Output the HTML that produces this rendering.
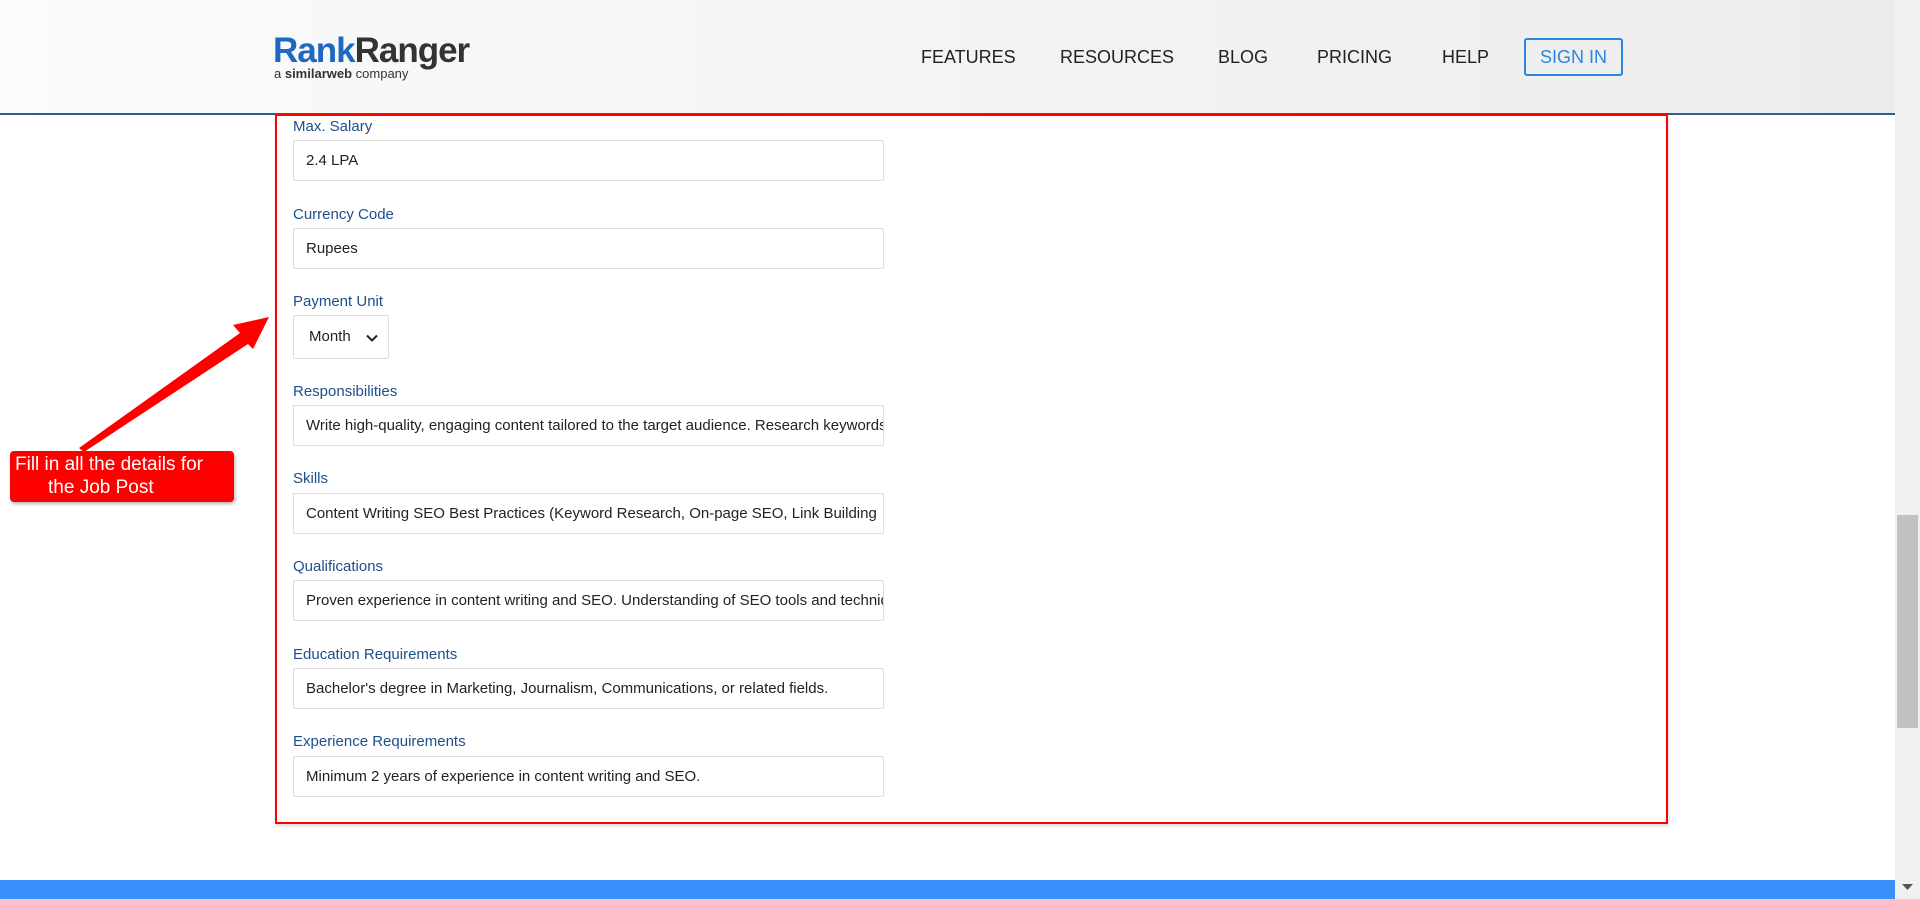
<!DOCTYPE html>
<html><head><meta charset="utf-8"><style>
*{box-sizing:border-box;margin:0;padding:0}
html,body{width:1920px;height:899px;overflow:hidden;background:#fff;font-family:"Liberation Sans",Arial,sans-serif;position:relative}
.hdr{position:absolute;left:0;top:0;width:1895px;height:115px;background:linear-gradient(90deg,#fbfbfb,#ececec);border-bottom:2px solid #2f5f8f}
.logo{position:absolute;left:273px;top:31px;font-weight:bold;font-size:35px;letter-spacing:-1px;line-height:40px}
.logo .a{color:#1f68c0}.logo .b{color:#333}
.sub{position:absolute;left:274px;top:67px;font-size:13px;color:#333;line-height:14px}
.sub b{font-weight:bold}
.nav{position:absolute;top:45px;font-size:18px;color:#222;line-height:24px}
.sign{position:absolute;left:1524px;top:38px;width:99px;height:38px;border:2px solid #2a86e0;border-radius:3px;color:#2a86e0;font-size:18px;text-align:center;line-height:34px}
.box{position:absolute;left:275px;top:114px;width:1393px;height:710px;border:2px solid #f00;box-shadow:1px 2px 3px rgba(0,0,0,.15)}
.lbl{position:absolute;left:293px;font-size:15px;color:#1d4f8c;line-height:18px}
.inp{position:absolute;left:293px;width:591px;height:41px;border:1px solid #ddd;border-radius:2px;font-size:15px;color:#222;padding-left:12px;line-height:39px;white-space:nowrap;overflow:hidden}
.sel{position:absolute;left:293px;top:315px;width:96px;height:44px;border:1px solid #ddd;border-radius:2px;font-size:15px;color:#222;padding-left:15px;line-height:42px}
.call{position:absolute;left:10px;top:451px;width:224px;height:51px;background:#f00;border-radius:4px;color:#fff;font-size:19px;line-height:23px;padding:2px 0 0 5px;box-shadow:1px 2px 3px rgba(0,0,0,.3)}
.foot{position:absolute;left:0;top:880px;width:1895px;height:19px;background:#3a91fb}
.sb{position:absolute;left:1895px;top:0;width:25px;height:899px;background:#f1f1f1}
.th{position:absolute;left:1897px;top:515px;width:21px;height:213px;background:#c1c1c1}
</style></head><body>
<div class="hdr"></div>
<div class="logo"><span class="a">Rank</span><span class="b">Ranger</span></div>
<div class="sub">a <b>similarweb</b> company</div>
<div class="nav" style="left:921px">FEATURES</div>
<div class="nav" style="left:1060px">RESOURCES</div>
<div class="nav" style="left:1218px">BLOG</div>
<div class="nav" style="left:1317px">PRICING</div>
<div class="nav" style="left:1442px">HELP</div>
<div class="sign">SIGN IN</div>
<div class="box"></div>
<div class="lbl" style="top:118px">Max. Salary</div>
<div class="inp" style="top:140px">2.4 LPA</div>
<div class="lbl" style="top:206px">Currency Code</div>
<div class="inp" style="top:228px">Rupees</div>
<div class="lbl" style="top:293px">Payment Unit</div>
<div class="sel">Month<svg style="position:absolute;left:72px;top:18px" width="12" height="8" viewBox="0 0 12 8"><path d="M1 1.5L6 6.5L11 1.5" fill="none" stroke="#222" stroke-width="2"/></svg></div>
<div class="lbl" style="top:383px">Responsibilities</div>
<div class="inp" style="top:405px">Write high-quality, engaging content tailored to the target audience. Research keywords</div>
<div class="lbl" style="top:470px">Skills</div>
<div class="inp" style="top:493px">Content Writing SEO Best Practices (Keyword Research, On-page SEO, Link Building</div>
<div class="lbl" style="top:558px">Qualifications</div>
<div class="inp" style="top:580px">Proven experience in content writing and SEO. Understanding of SEO tools and techniques</div>
<div class="lbl" style="top:646px">Education Requirements</div>
<div class="inp" style="top:668px">Bachelor's degree in Marketing, Journalism, Communications, or related fields.</div>
<div class="lbl" style="top:733px">Experience Requirements</div>
<div class="inp" style="top:756px">Minimum 2 years of experience in content writing and SEO.</div>
<svg style="position:absolute;left:0;top:0" width="300" height="460"><path d="M79 448L84 452L248 344L253 349L269 317L233 325L240 333Z" fill="#f00"/></svg>
<div class="call">Fill in all the details for<br><span style="padding-left:33px">the Job Post</span></div>
<div class="foot"></div>
<div class="sb"></div><div class="th"></div>
<svg style="position:absolute;left:1902px;top:883px" width="12" height="8"><path d="M0 1H11L5.5 7Z" fill="#555"/></svg>
</body></html>
